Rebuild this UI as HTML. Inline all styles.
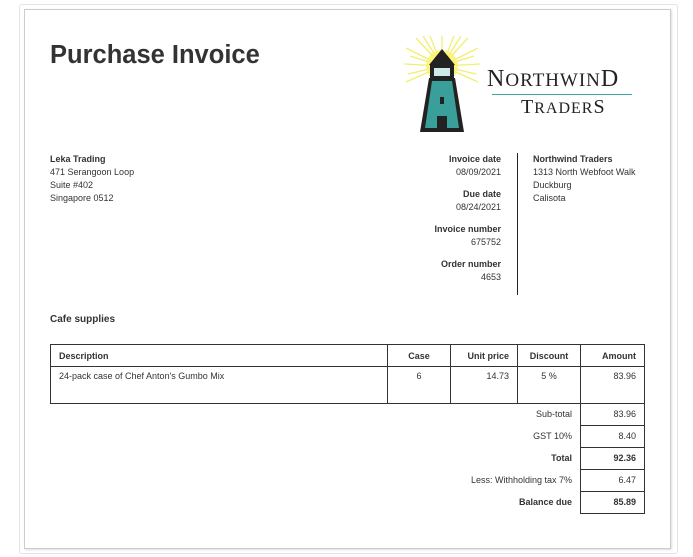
<!DOCTYPE html>
<html><head><style>
body{margin:0;width:693px;height:557px;background:#fff;font-family:"Liberation Sans",Arial,sans-serif;color:#333;font-size:9px;position:relative;overflow:hidden}
.o{position:absolute;left:19px;top:4px;width:657px;height:548px;border:1px solid #e4e4e4;border-radius:3px}
.p{position:absolute;left:24px;top:9px;width:645px;height:538px;border:1px solid #ccc;box-shadow:1px 1px 2px #ddd}
.a{position:absolute;line-height:13px}
b{font-weight:bold}
h1{position:absolute;left:50px;top:41px;margin:0;font-size:25.5px;font-weight:bold;color:#333}
table{position:absolute;border-collapse:collapse;font-size:9px}
td,th{border:1px solid #333;padding:0 8px;height:21px;text-align:right}
th{font-weight:bold}
</style></head><body>
<div class="o"></div><div class="p"></div>
<h1>Purchase Invoice</h1>
<svg style="position:absolute;left:404px;top:36px" width="76" height="98" viewBox="0 0 76 98">
<g stroke="#f4ee70" stroke-width="1.3">
<line x1="38" y1="30" x2="2" y2="12"/><line x1="38" y1="30" x2="74" y2="12"/><line x1="38" y1="30" x2="0" y2="28"/><line x1="38" y1="30" x2="76" y2="28"/><line x1="38" y1="30" x2="12" y2="2"/><line x1="38" y1="30" x2="64" y2="2"/><line x1="38" y1="30" x2="26" y2="0"/><line x1="38" y1="30" x2="50" y2="0"/><line x1="38" y1="30" x2="2" y2="46"/><line x1="38" y1="30" x2="74" y2="46"/><line x1="38" y1="30" x2="38" y2="0"/><line x1="38" y1="30" x2="4" y2="38"/><line x1="38" y1="30" x2="72" y2="38"/><line x1="38" y1="30" x2="6" y2="20"/><line x1="38" y1="30" x2="70" y2="20"/><line x1="38" y1="30" x2="19" y2="0"/><line x1="38" y1="30" x2="57" y2="0"/></g>
<circle cx="38" cy="30" r="16" fill="#fbf36a" opacity=".8"/>
<polygon points="38,13 25,29 51,29" fill="#222"/>
<rect x="26" y="29" width="24" height="13" fill="#222"/>
<rect x="30" y="32" width="16" height="8" fill="#cfe8e8"/>
<polygon points="25,42 51,42 60,96 16,96" fill="#222"/>
<polygon points="28,45 48,45 55,92 21,92" fill="#3a9e9a"/>
<rect x="36" y="61" width="4" height="7" fill="#222"/>
<rect x="33" y="80" width="10" height="13" fill="#222"/>
</svg>
<div class="a" style="left:487px;top:66px;font-family:'Liberation Serif',serif;font-size:24px;line-height:26px;color:#222;letter-spacing:1px">N<span style="font-size:19px">ORTHWIN</span>D</div>
<div style="position:absolute;left:492px;top:94px;width:140px;height:1px;background:#3aa8a4"></div>
<div class="a" style="left:521px;top:96px;font-family:'Liberation Serif',serif;font-size:20px;line-height:22px;color:#222;letter-spacing:1px">T<span style="font-size:16px">RADER</span>S</div>
<div class="a" style="left:50px;top:153px"><b>Leka Trading</b><br>471 Serangoon Loop<br>Suite #402<br>Singapore 0512</div>
<div class="a" style="right:192px;top:153px;text-align:right"><b>Invoice date</b><br>08/09/2021<div style="height:9px"></div><b>Due date</b><br>08/24/2021<div style="height:9px"></div><b>Invoice number</b><br>675752<div style="height:9px"></div><b>Order number</b><br>4653</div>
<div style="position:absolute;left:517px;top:153px;width:1px;height:142px;background:#222"></div>
<div class="a" style="left:533px;top:153px"><b>Northwind Traders</b><br>1313 North Webfoot Walk<br>Duckburg<br>Calisota</div>
<div class="a" style="left:50px;top:313px;font-size:10px"><b>Cafe supplies</b></div>
<table style="left:50px;top:344px;width:595px">
<tr><th style="text-align:left;width:320px">Description</th><th style="text-align:center;width:46px">Case</th><th style="width:50px">Unit price</th><th style="text-align:center;width:46px">Discount</th><th style="width:47px">Amount</th></tr>
<tr><td style="text-align:left;vertical-align:top;height:32px;padding-top:4px">24-pack case of Chef Anton's Gumbo Mix</td><td style="text-align:center;vertical-align:top;padding-top:4px">6</td><td style="vertical-align:top;padding-top:4px">14.73</td><td style="text-align:center;vertical-align:top;padding-top:4px">5 %</td><td style="vertical-align:top;padding-top:4px">83.96</td></tr>
</table>
<table style="left:50px;top:403px;width:595px">
<tr><td style="border:none;height:22px">Sub-total</td><td style="width:47px;border-top:none">83.96</td></tr>
<tr><td style="border:none;height:21px">GST 10%</td><td>8.40</td></tr>
<tr><td style="border:none;height:21px"><b>Total</b></td><td><b>92.36</b></td></tr>
<tr><td style="border:none;height:21px">Less: Withholding tax 7%</td><td>6.47</td></tr>
<tr><td style="border:none;height:21px"><b>Balance due</b></td><td><b>85.89</b></td></tr>
</table>
</body></html>
